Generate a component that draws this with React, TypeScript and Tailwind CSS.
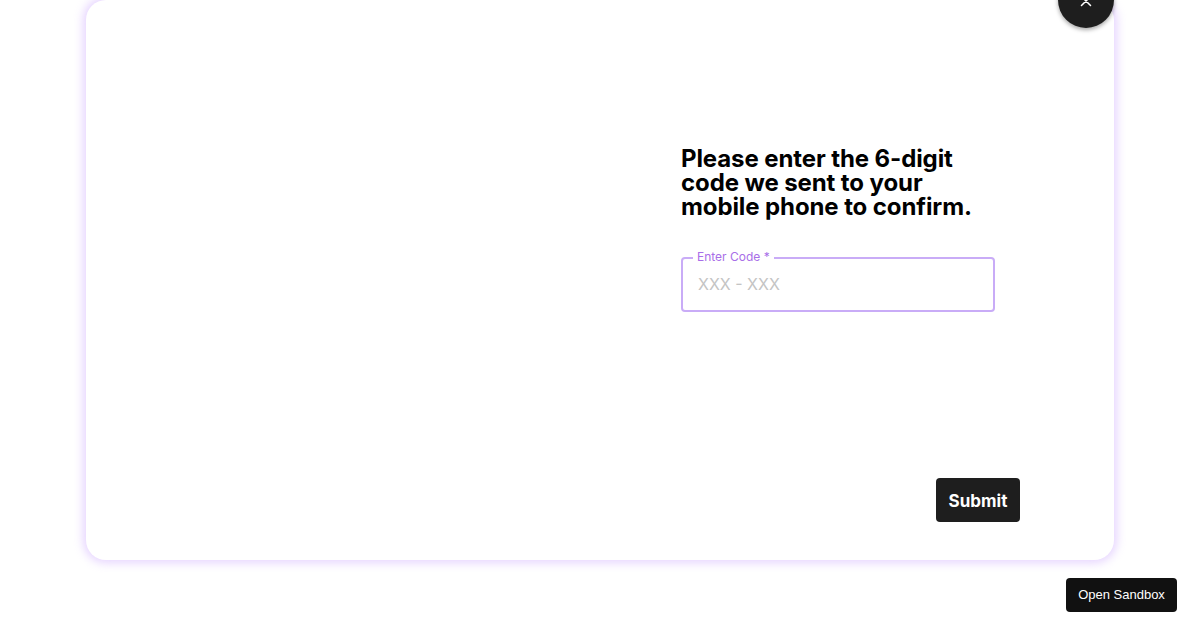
import React from "react";

export default function App() {
  return (
    <div className="relative w-[1200px] h-[630px] bg-white overflow-hidden" style={{ fontFamily: "Inter, 'Liberation Sans', sans-serif" }}>
      <div className="absolute left-[86px] top-0 w-[1028px] h-[560px] rounded-[20px] bg-white shadow-[0_0_10px_3px_rgba(200,160,255,0.45)] flex">
        <div className="w-[595px]" />
        <div className="flex flex-col flex-1 pt-[147px] pr-[94px]">
          <h1 className="text-[24px] leading-[24px] font-bold text-black tracking-[-0.1px] w-[320px]">
            Please enter the 6-digit code we sent to your mobile phone to confirm.
          </h1>
          <div className="relative mt-[38px] w-[314px] h-[55px] rounded-[4px] border-2 border-[#c9acf7]">
            <span className="absolute left-[10px] -top-[9px] bg-white px-[4px] text-[12px] leading-[14px] text-[#a86ee8] tracking-[0px]">
              Enter Code *
            </span>
            <div className="pl-[15px] pt-[14px] text-[16px] leading-[22px] text-[#c4c4c4]">XXX - XXX</div>
          </div>
          <div className="flex-1" />
          <div className="flex justify-end pb-[38px]">
            <button className="w-[84px] h-[44px] pt-[3px] rounded-[4px] bg-[#1e1e1e] text-white text-[17px] font-bold">Submit</button>
          </div>
        </div>
      </div>
      <button className="absolute left-[1058px] -top-[28px] w-[56px] h-[56px] rounded-full bg-[#1e1e1e] shadow-[0_2px_4px_rgba(0,0,0,0.35)] flex items-end justify-center pb-[18px]">
        <svg width="18" height="18" viewBox="0 0 24 24" fill="none" stroke="white" strokeWidth="2" strokeLinecap="round">
          <path d="M6 6l12 12M18 6L6 18" />
        </svg>
      </button>
      <button className="absolute left-[1066px] top-[578px] w-[111px] h-[34px] rounded-[4px] bg-[#111111] text-white text-[13px]" style={{ fontFamily: "'Liberation Sans', Arial, sans-serif" }}>
        Open Sandbox
      </button>
    </div>
  );
}
